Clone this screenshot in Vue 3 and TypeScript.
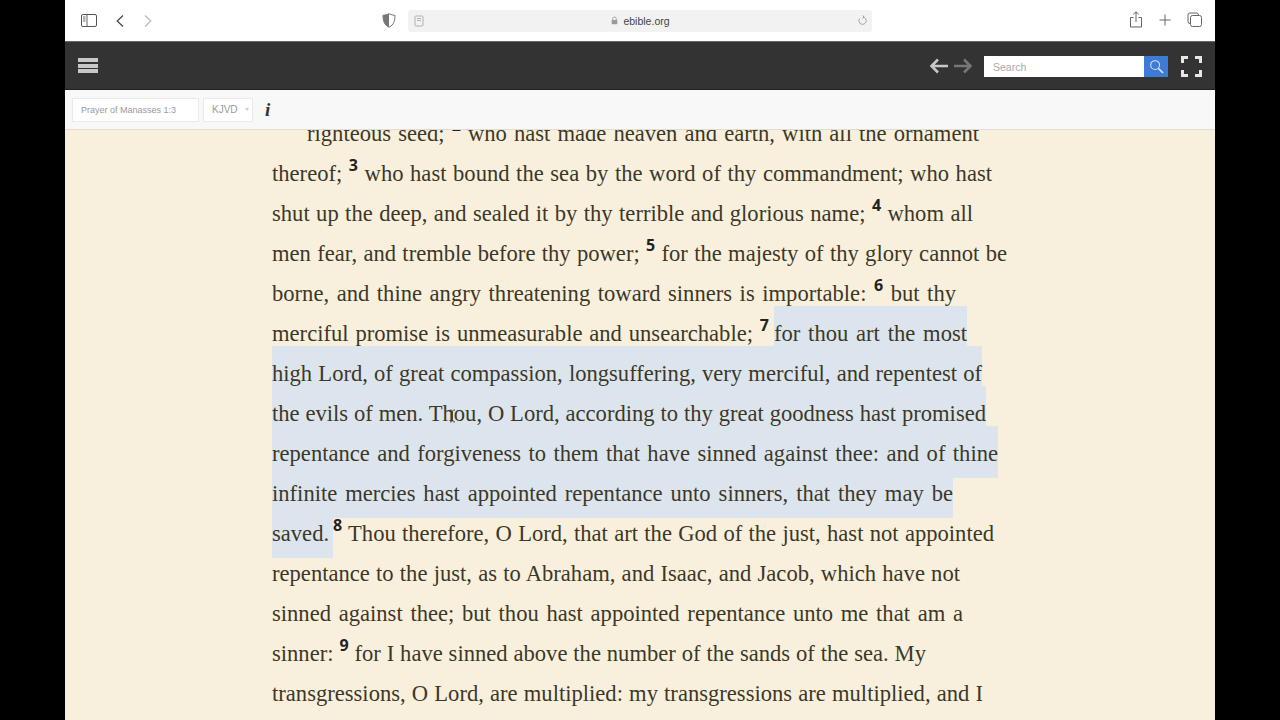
<script setup lang="ts">
interface Part { text?: string; verse?: string }
interface Seg { width: number; parts: Part[]; selected?: boolean; pad?: number }
interface Line { indent?: number; segs: Seg[] }

const lines: Line[] = [
  { indent: 35, segs: [{ width: 672, parts: [{ text: 'righteous seed; ' }, { verse: '2' }, { text: ' who hast made heaven and earth, with all the ornament' }] }] },
  { segs: [{ width: 720, parts: [{ text: 'thereof; ' }, { verse: '3' }, { text: ' who hast bound the sea by the word of thy commandment; who hast' }] }] },
  { segs: [{ width: 701, parts: [{ text: 'shut up the deep, and sealed it by thy terrible and glorious name; ' }, { verse: '4' }, { text: ' whom all' }] }] },
  { segs: [{ width: 735, parts: [{ text: 'men fear, and tremble before thy power; ' }, { verse: '5' }, { text: ' for the majesty of thy glory cannot be' }] }] },
  { segs: [{ width: 684, parts: [{ text: 'borne, and thine angry threatening toward sinners is importable: ' }, { verse: '6' }, { text: ' but thy' }] }] },
  { segs: [
    { width: 497, pad: 5, parts: [{ text: 'merciful promise is unmeasurable and unsearchable; ' }, { verse: '7' }] },
    { width: 193, selected: true, parts: [{ text: 'for thou art the most' }] }
  ] },
  { segs: [{ width: 710, selected: true, parts: [{ text: 'high Lord, of great compassion, longsuffering, very merciful, and repentest of' }] }] },
  { segs: [{ width: 714, selected: true, parts: [{ text: 'the evils of men. Thou, O Lord, according to thy great goodness hast promised' }] }] },
  { segs: [{ width: 726, selected: true, parts: [{ text: 'repentance and forgiveness to them that have sinned against thee: and of thine' }] }] },
  { segs: [{ width: 681, selected: true, parts: [{ text: 'infinite mercies hast appointed repentance unto sinners, that they may be' }] }] },
  { segs: [
    { width: 56, pad: 5, selected: true, parts: [{ text: 'saved.' }] },
    { width: 661, parts: [{ verse: '8' }, { text: ' Thou therefore, O Lord, that art the God of the just, hast not appointed' }] }
  ] },
  { segs: [{ width: 688, parts: [{ text: 'repentance to the just, as to Abraham, and Isaac, and Jacob, which have not' }] }] },
  { segs: [{ width: 691, parts: [{ text: 'sinned against thee; but thou hast appointed repentance unto me that am a' }] }] },
  { segs: [{ width: 654, parts: [{ text: 'sinner: ' }, { verse: '9' }, { text: ' for I have sinned above the number of the sands of the sea. My' }] }] },
  { segs: [{ width: 711, parts: [{ text: 'transgressions, O Lord, are multiplied: my transgressions are multiplied, and I' }] }] }
]

function segStyle(seg: Seg) {
  return { width: seg.width + 'px', paddingRight: (seg.pad ?? 0) + 'px' }
}
</script>

<template>
  <div class="frame">
    <header class="safari">
      <svg class="ic sidebar" viewBox="0 0 16 13" width="16" height="13" fill="none" stroke="#555" stroke-width="1">
        <rect x="0.5" y="0.5" width="15" height="12" rx="1.5" />
        <path d="M6 0.5v12M2 3h2.5M2 5h2.5M2 7h2.5" stroke-width="0.9" />
      </svg>
      <svg class="ic back" viewBox="0 0 10 14" width="10" height="14" fill="none" stroke="#444" stroke-width="1.2">
        <path d="M8 1.5 2.2 7 8 12.5" />
      </svg>
      <svg class="ic forward" viewBox="0 0 10 14" width="10" height="14" fill="none" stroke="#bbb" stroke-width="1.2">
        <path d="M2 1.5 7.8 7 2 12.5" />
      </svg>
      <svg class="ic shield" viewBox="0 0 14 15" width="14" height="15">
        <path d="M7 .8C5 1.8 3 2.2 1 2.3c0 5 1 9.6 6 11.9 5-2.3 6-6.900 6-11.900C11 2.200 9 1.800 7 .8Z" fill="#fff" stroke="#777" stroke-width="1" />
        <path d="M7 .8C5 1.800 3 2.200 1 2.300c0 5 1 9.600 6 11.900Z" fill="#777" />
      </svg>
      <div class="address">
        <svg class="ic" viewBox="0 0 10 12" width="10" height="12" fill="none" stroke="#aaa" stroke-width="0.9">
          <rect x="1" y="1" width="8" height="10" rx="1" />
          <path d="M3 3.500h4M3 5.500h4" />
        </svg>
        <div class="url">
          <svg viewBox="0 0 8 10" width="7" height="9">
            <path d="M2 4.500V3a2 2 0 0 1 4 0v1.500" fill="none" stroke="#999" stroke-width="1" />
            <rect x="0.800" y="4.300" width="6.400" height="5" rx="0.800" fill="#999" />
          </svg>
          <span>ebible.org</span>
        </div>
        <svg class="ic" viewBox="0 0 12 12" width="11" height="11" fill="none" stroke="#888" stroke-width="0.8">
          <path d="M6.500 2.200A4 4 0 1 1 2.700 4M6 .5 7.800 2.200 6 3.800" />
        </svg>
      </div>
      <svg class="ic share" viewBox="0 0 14 17" width="14" height="17" fill="none" stroke="#666" stroke-width="1">
        <path d="M4.500 6.500H1.500v9.500h11V6.500H9.500M7 11V1M4.300 3.400 7 .8l2.700 2.600" />
      </svg>
      <svg class="ic plus" viewBox="0 0 14 14" width="14" height="14" fill="none" stroke="#666" stroke-width="1">
        <path d="M7 1.500v11M1.500 7h11" />
      </svg>
      <svg class="ic tabs" viewBox="0 0 15 15" width="15" height="15" fill="none" stroke="#666" stroke-width="1">
        <rect x="3.500" y="3.500" width="11" height="11" rx="2" />
        <path d="M3.500 11.500H3a2 2 0 0 1-2-2V3a2 2 0 0 1 2-2h6.500a2 2 0 0 1 2 2v.500" />
      </svg>
    </header>

    <nav class="nav">
      <div class="burger"><i></i><i></i><i></i></div>
      <svg class="arrow first" viewBox="0 0 19 16" width="19" height="16" fill="none" stroke="#c8c8c8" stroke-width="2.600">
        <path d="M19 8H3M9 1.500 2.500 8 9 14.500" />
      </svg>
      <svg class="arrow" viewBox="0 0 19 16" width="19" height="16" fill="none" stroke="#777" stroke-width="2.600">
        <path d="M0 8h16M10 1.500 16.500 8 10 14.500" />
      </svg>
      <div class="search">
        <input class="search-input" type="text" placeholder="Search" />
        <div class="search-btn">
          <svg viewBox="0 0 16 16" width="15" height="15" fill="none" stroke="#dbe7f8" stroke-width="1.100">
            <circle cx="6.500" cy="6.500" r="4.700" />
            <path d="m10 10 5 5" stroke-width="1.600" />
          </svg>
        </div>
      </div>
      <svg class="full" viewBox="0 0 21 21" width="21" height="21" fill="#e6e6e6">
        <path d="M0 0h7v3H3v4H0ZM14 0h7v7h-3V3h-4ZM0 14h3v4h4v3H0ZM21 14v7h-7v-3h4v-4Z" />
      </svg>
    </nav>

    <div class="tools">
      <input class="ref" type="text" value="Prayer of Manasses 1:3" readonly />
      <div class="version"><span>KJVD</span><b></b></div>
      <span class="info">i</span>
    </div>

    <main class="reader">
      <article class="text">
        <div v-for="(line, i) in lines" :key="i" class="line" :class="{ indented: line.indent }">
          <div
            v-for="(seg, j) in line.segs"
            :key="j"
            class="seg"
            :class="{ selected: seg.selected }"
            :style="segStyle(seg)"
          >
            <template v-for="(part, k) in seg.parts" :key="k">
              <sup v-if="part.verse" class="verse">{{ part.verse }}</sup>
              <template v-else>{{ part.text }}</template>
            </template>
          </div>
        </div>
      </article>
      <svg class="cursor" viewBox="0 0 7 14" width="7" height="14" fill="none" stroke="#444" stroke-width="1">
        <path d="M1 1c1 0 2 .3 2.500 1 .5-.7 1.500-1 2.500-1M3.500 2v10M1 13c1 0 2-.3 2.500-1 .5.700 1.500 1 2.500 1" />
      </svg>
    </main>
  </div>
</template>

<style scoped>
.frame {
  width: 1150px;
  height: 720px;
  margin: 0 auto;
  display: flex;
  flex-direction: column;
  overflow: hidden;
  background: #f8f0dc;
  font-family: "Liberation Sans", Arial, sans-serif;
}
.safari {
  height: 41px;
  flex: none;
  box-sizing: content-box;
  display: flex;
  align-items: center;
  background: #fff;
  border-bottom: 1px solid #666;
  padding-left: 16px;
}
.ic { display: block; flex: none; }
.back { margin-left: 18px; }
.forward { margin-left: 18px; }
.shield { margin-left: 229px; }
.address {
  margin-left: 12px;
  width: 464px;
  height: 22px;
  flex: none;
  background: #f2f2f2;
  border-radius: 3px;
  display: flex;
  align-items: center;
  justify-content: space-between;
  padding: 0 4px 0 6px;
  box-sizing: border-box;
}
.url {
  display: flex;
  align-items: center;
  gap: 5px;
  font-size: 10.500px;
  color: #444;
}
.share { margin-left: 257px; margin-bottom: 2px; }
.plus { margin-left: 15px; margin-bottom: 2px; }
.tabs { margin-left: 15px; margin-bottom: 2px; }

.nav {
  height: 47px;
  flex: none;
  display: flex;
  align-items: center;
  background: #333;
  border-bottom: 1px solid #222;
  padding-left: 13px;
}
.burger {
  width: 20px;
  display: flex;
  flex-direction: column;
  gap: 1.500px;
}
.burger i {
  display: block;
  height: 4px;
  background: #c8c8c8;
}
.arrow { flex: none; }
.arrow.first { margin-left: auto; margin-right: 6px; }
.search {
  display: flex;
  margin-left: 11px;
  margin-top: 2px;
  height: 21px;
}
.search-input {
  width: 160px;
  height: 21px;
  box-sizing: border-box;
  border: 0;
  padding: 0 9px;
  margin: 0;
  background: #fff;
  font: 10.500px "Liberation Sans", Arial, sans-serif;
  outline: none;
}
.search-input::placeholder { color: #a8a8a8; opacity: 1; }
.search-btn {
  width: 24px;
  height: 21px;
  display: flex;
  align-items: center;
  justify-content: center;
  background: #3d7bd6;
}
.full { margin: 2px 13px 0; flex: none; }

.tools {
  height: 40px;
  flex: none;
  display: flex;
  align-items: center;
  box-sizing: border-box;
  background: #f8f8f8;
  border-bottom: 1px solid #e0dccf;
  padding-left: 7px;
  position: relative;
  z-index: 2;
}
.ref {
  width: 127px;
  height: 24px;
  box-sizing: border-box;
  border: 1px solid #eaeaea;
  padding: 1px 8px 0;
  margin: 0;
  background: #fff;
  color: #999;
  font: 9px "Liberation Sans", Arial, sans-serif;
  outline: none;
}
.version {
  margin-left: 4px;
  width: 50px;
  height: 24px;
  box-sizing: border-box;
  border: 1px solid #eaeaea;
  background: #fff;
  color: #999;
  font-size: 10px;
  display: flex;
  align-items: center;
  padding-left: 8px;
  gap: 7px;
}
.version b {
  width: 0;
  height: 0;
  border-left: 2px solid transparent;
  border-right: 2px solid transparent;
  border-top: 3px solid #ccc;
}
.info {
  margin-left: 12px;
  font: italic bold 19px "Liberation Serif", "Times New Roman", serif;
  color: #333;
  width: 6px;
}

.reader {
  flex: 1;
  min-height: 0;
  position: relative;
  overflow: hidden;
}
.text {
  margin: -16px 0 0 207px;
  position: relative;
  z-index: 0;
  font-family: "Liberation Serif", "Times New Roman", serif;
  font-size: 22.600px;
  line-height: 40px;
  color: #3c3828;
}
.line { display: flex; height: 40px; }
.line.indented { padding-left: 35px; }
.seg {
  flex: none;
  position: relative;
  text-align: justify;
  text-align-last: justify;
}
.seg.selected::before {
  content: "";
  position: absolute;
  left: 0;
  right: 0;
  top: -8px;
  height: 52px;
  background: #dce5ee;
  z-index: -1;
}
.verse {
  font-family: "Open Sans", "Liberation Sans", sans-serif;
  font-weight: 700;
  font-size: 16px;
  line-height: 0;
  color: #222;
  vertical-align: 10px;
}
.cursor {
  position: absolute;
  left: 384px;
  top: 279px;
}
</style>

<style>
html, body { background: #000; margin: 0; }
</style>
